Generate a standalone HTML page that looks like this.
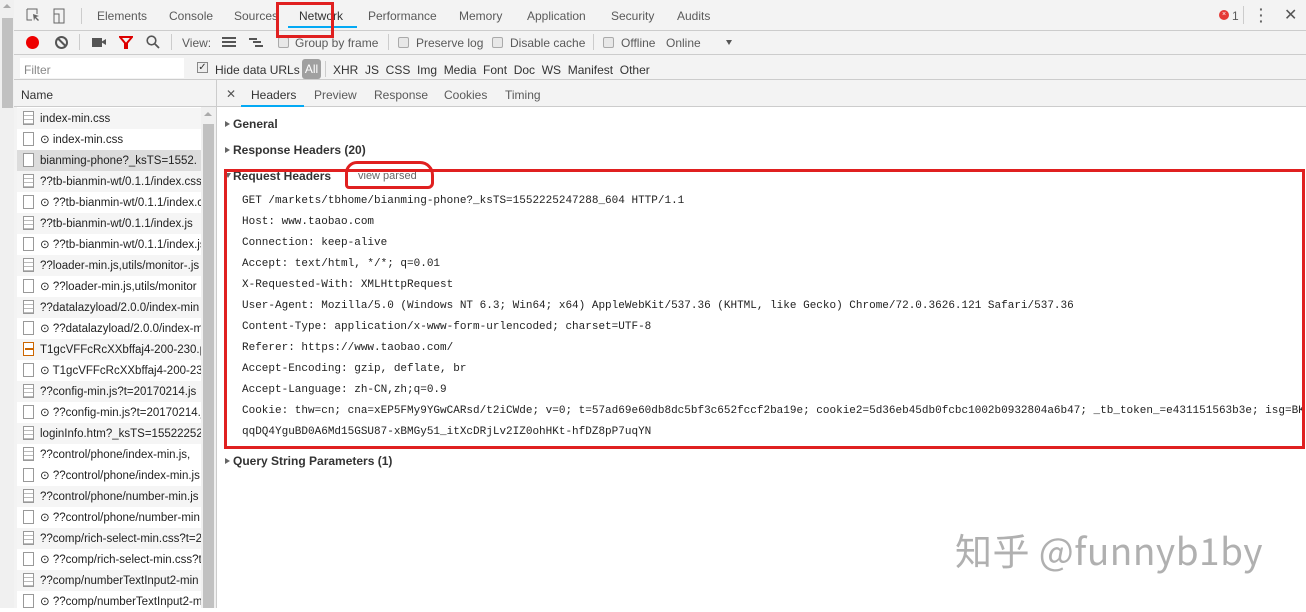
<!DOCTYPE html>
<html><head><meta charset="utf-8"><style>
*{margin:0;padding:0;box-sizing:border-box}
body{width:1306px;height:608px;overflow:hidden;background:#fff;font-family:"Liberation Sans",sans-serif;font-size:12px;color:#333;position:relative}
.a{position:absolute;white-space:nowrap}
.bar{position:absolute;left:14px;right:0;background:#f3f3f3;border-bottom:1px solid #ccc}
.t{position:absolute;white-space:nowrap;color:#5a5a5a;font-size:12px}
.mono{font-family:"Liberation Mono",monospace;font-size:11px;color:#222;position:absolute;left:242px;white-space:nowrap}
.cb{position:absolute;width:11px;height:11px;border:1px solid #aaa;background:#e8e8e8;border-radius:2px}
.row{position:absolute;left:17px;width:184px;height:21px;white-space:nowrap;overflow:hidden;font-size:11.5px;color:#222;line-height:22px}
.doc{display:inline-block;width:11px;height:14px;border:1px solid #999;vertical-align:-3px;margin:0 6px 0 6px;background:#fff}
.doc.l{background:repeating-linear-gradient(#fff 0 3px,#bbb 3px 4px)}
.sec{position:absolute;left:233px;font-weight:bold;font-size:12px;color:#333}
.tri{position:absolute;left:225px;width:0;height:0;border-left:5px solid #666;border-top:3.5px solid transparent;border-bottom:3.5px solid transparent}
</style></head><body>
<div class="a" style="left:0;top:0;width:14px;height:608px;background:#f0f0f0"></div>
<div class="a" style="left:2px;top:18px;width:11px;height:90px;background:#c1c1c1"></div>
<div class="a" style="left:3px;top:4px;width:0;height:0;border-left:4px solid transparent;border-right:4px solid transparent;border-bottom:4px solid #aaa"></div>

<div class="bar" style="top:0;height:31px"></div>
<div class="bar" style="top:31px;height:24px"></div>
<div class="bar" style="top:55px;height:25px"></div>
<div class="bar" style="top:80px;height:27px"></div>

<svg class="a" style="left:26px;top:8px" width="40" height="16"><path d="M1 1h10v5M1 1v11h5" stroke="#666" fill="none"/><path d="M7 6l6 2-3 1 3 3-1 1-3-3-1 3z" fill="#666"/><rect x="28" y="1" width="10" height="14" fill="none" stroke="#666"/><rect x="28" y="6" width="5" height="9" fill="none" stroke="#666"/></svg>
<div class="a" style="left:81px;top:8px;width:1px;height:16px;background:#ccc"></div>
<div class="t" style="left:97px;top:9px">Elements</div>
<div class="t" style="left:169px;top:9px">Console</div>
<div class="t" style="left:234px;top:9px">Sources</div>
<div class="t" style="left:299px;top:9px;color:#333">Network</div>
<div class="a" style="left:288px;top:26px;width:69px;height:2px;background:#03a9f4"></div>
<div class="t" style="left:368px;top:9px">Performance</div>
<div class="t" style="left:459px;top:9px">Memory</div>
<div class="t" style="left:527px;top:9px">Application</div>
<div class="t" style="left:611px;top:9px">Security</div>
<div class="t" style="left:677px;top:9px">Audits</div>
<div class="a" style="left:1219px;top:10px;width:10px;height:10px;border-radius:50%;background:#e53935;color:#fff;font-size:7px;line-height:10px;text-align:center">×</div>
<div class="t" style="left:1232px;top:9px">1</div>
<div class="a" style="left:1243px;top:6px;width:1px;height:18px;background:#ccc"></div>
<div class="t" style="left:1259px;top:6px;font-weight:bold;font-size:14px;line-height:6px;color:#666">·<br>·<br>·</div>
<div class="t" style="left:1284px;top:5px;font-size:16px;color:#555">✕</div>

<div class="a" style="left:26px;top:36px;width:13px;height:13px;border-radius:50%;background:#e00"></div>
<div class="a" style="left:55px;top:36px;width:13px;height:13px;border-radius:50%;border:2px solid #555"></div>
<div class="a" style="left:56px;top:41px;width:11px;height:2px;background:#555;transform:rotate(45deg)"></div>
<div class="a" style="left:79px;top:34px;width:1px;height:16px;background:#ccc"></div>
<div class="a" style="left:92px;top:38px;width:10px;height:9px;background:#555"></div>
<div class="a" style="left:101px;top:39px;border-right:5px solid #555;border-top:3.5px solid transparent;border-bottom:3.5px solid transparent"></div>
<svg class="a" style="left:119px;top:36px" width="14" height="13"><path d="M1 1h12l-5 6v5h-2v-5z" fill="none" stroke="#d00" stroke-width="2"/></svg>
<svg class="a" style="left:146px;top:35px" width="14" height="14"><circle cx="5.5" cy="5.5" r="4.3" fill="none" stroke="#555" stroke-width="1.6"/><path d="M9 9l4 4" stroke="#555" stroke-width="1.8"/></svg>
<div class="a" style="left:171px;top:34px;width:1px;height:16px;background:#ccc"></div>
<div class="t" style="left:182px;top:36px">View:</div>
<div class="a" style="left:222px;top:37px;width:14px;height:10px;background:repeating-linear-gradient(#555 0 2px,transparent 2px 4px)"></div>
<div class="a" style="left:249px;top:38px;width:14px;height:9px;background:linear-gradient(#555,#555) 0 0/8px 2px no-repeat,linear-gradient(#555,#555) 4px 3px/8px 2px no-repeat,linear-gradient(#555,#555) 6px 7px/8px 2px no-repeat"></div>
<div class="cb" style="left:278px;top:37px"></div>
<div class="t" style="left:295px;top:36px">Group by frame</div>
<div class="a" style="left:388px;top:34px;width:1px;height:16px;background:#ccc"></div>
<div class="cb" style="left:398px;top:37px"></div>
<div class="t" style="left:416px;top:36px">Preserve log</div>
<div class="cb" style="left:492px;top:37px"></div>
<div class="t" style="left:510px;top:36px">Disable cache</div>
<div class="a" style="left:593px;top:34px;width:1px;height:16px;background:#ccc"></div>
<div class="cb" style="left:603px;top:37px"></div>
<div class="t" style="left:621px;top:36px">Offline</div>
<div class="t" style="left:666px;top:36px">Online</div>
<div class="a" style="left:726px;top:40px;border-top:5px solid #555;border-left:3.5px solid transparent;border-right:3.5px solid transparent"></div>

<div class="a" style="left:20px;top:58px;width:164px;height:20px;background:#fff"></div>
<div class="t" style="left:24px;top:63px;color:#888">Filter</div>
<div class="a" style="left:197px;top:62px;width:11px;height:11px;border:1px solid #888;background:#eee;font-size:10px;line-height:9px;text-align:center;color:#333">✓</div>
<div class="t" style="left:215px;top:63px;color:#333">Hide data URLs</div>
<div class="a" style="left:302px;top:59px;width:19px;height:20px;border-radius:3px;background:#a0a0a0;color:#fff;font-size:12px;line-height:21px;text-align:center">All</div>
<div class="a" style="left:325px;top:61px;width:1px;height:16px;background:#ccc"></div>
<div class="t" style="left:333px;top:63px;color:#333">XHR&nbsp;&nbsp;JS&nbsp;&nbsp;CSS&nbsp;&nbsp;Img&nbsp;&nbsp;Media&nbsp;&nbsp;Font&nbsp;&nbsp;Doc&nbsp;&nbsp;WS&nbsp;&nbsp;Manifest&nbsp;&nbsp;Other</div>

<div class="t" style="left:21px;top:88px;color:#333">Name</div>
<div class="a" style="left:216px;top:80px;width:1px;height:528px;background:#ccc"></div>
<div class="t" style="left:226px;top:87px;color:#555">✕</div>
<div class="t" style="left:251px;top:88px;color:#333">Headers</div>
<div class="a" style="left:241px;top:105px;width:63px;height:2px;background:#03a9f4"></div>
<div class="t" style="left:314px;top:88px">Preview</div>
<div class="t" style="left:374px;top:88px">Response</div>
<div class="t" style="left:444px;top:88px">Cookies</div>
<div class="t" style="left:505px;top:88px">Timing</div>

<div class="a" style="left:14px;top:107px;width:3px;height:501px;background:#f3f3f3"></div>
<div class="a" style="left:201px;top:107px;width:15px;height:501px;background:#f0f0f0"></div>
<div class="a" style="left:203px;top:124px;width:11px;height:484px;background:#c1c1c1"></div>
<div class="a" style="left:204px;top:112px;border-left:4px solid transparent;border-right:4px solid transparent;border-bottom:4px solid #aaa"></div>
<div class="row" style="top:108px;background:#f5f5f5"><span class="doc l"></span>index-min.css</div>
<div class="row" style="top:129px"><span class="doc"></span>⊙ index-min.css</div>
<div class="row" style="top:150px;background:#dcdcdc"><span class="doc"></span>bianming-phone?_ksTS=1552.</div>
<div class="row" style="top:171px;background:#f5f5f5"><span class="doc l"></span>??tb-bianmin-wt/0.1.1/index.css</div>
<div class="row" style="top:192px"><span class="doc"></span>⊙ ??tb-bianmin-wt/0.1.1/index.css</div>
<div class="row" style="top:213px;background:#f5f5f5"><span class="doc l"></span>??tb-bianmin-wt/0.1.1/index.js</div>
<div class="row" style="top:234px"><span class="doc"></span>⊙ ??tb-bianmin-wt/0.1.1/index.js</div>
<div class="row" style="top:255px;background:#f5f5f5"><span class="doc l"></span>??loader-min.js,utils/monitor-.js</div>
<div class="row" style="top:276px"><span class="doc"></span>⊙ ??loader-min.js,utils/monitor</div>
<div class="row" style="top:297px;background:#f5f5f5"><span class="doc l"></span>??datalazyload/2.0.0/index-min</div>
<div class="row" style="top:318px"><span class="doc"></span>⊙ ??datalazyload/2.0.0/index-min</div>
<div class="row" style="top:339px;background:#f5f5f5"><span class="doc" style="border-color:#c60;background:linear-gradient(#c60,#c60) 1px 5px/8px 2px no-repeat,#fff"></span>T1gcVFFcRcXXbffaj4-200-230.png</div>
<div class="row" style="top:360px"><span class="doc"></span>⊙ T1gcVFFcRcXXbffaj4-200-230.png</div>
<div class="row" style="top:381px;background:#f5f5f5"><span class="doc l"></span>??config-min.js?t=20170214.js</div>
<div class="row" style="top:402px"><span class="doc"></span>⊙ ??config-min.js?t=20170214.js</div>
<div class="row" style="top:423px;background:#f5f5f5"><span class="doc l"></span>loginInfo.htm?_ksTS=1552225247</div>
<div class="row" style="top:444px"><span class="doc l"></span>??control/phone/index-min.js,</div>
<div class="row" style="top:465px"><span class="doc"></span>⊙ ??control/phone/index-min.js</div>
<div class="row" style="top:486px;background:#f5f5f5"><span class="doc l"></span>??control/phone/number-min.js</div>
<div class="row" style="top:507px"><span class="doc"></span>⊙ ??control/phone/number-min</div>
<div class="row" style="top:528px;background:#f5f5f5"><span class="doc l"></span>??comp/rich-select-min.css?t=2</div>
<div class="row" style="top:549px"><span class="doc"></span>⊙ ??comp/rich-select-min.css?t</div>
<div class="row" style="top:570px;background:#f5f5f5"><span class="doc l"></span>??comp/numberTextInput2-min</div>
<div class="row" style="top:591px"><span class="doc"></span>⊙ ??comp/numberTextInput2-min</div>

<div class="tri" style="top:121px"></div><div class="sec" style="top:117px">General</div>
<div class="tri" style="top:147px"></div><div class="sec" style="top:143px">Response Headers (20)</div>
<div class="a" style="left:225px;top:173px;border-top:5px solid #666;border-left:3.5px solid transparent;border-right:3.5px solid transparent"></div>
<div class="sec" style="top:169px">Request Headers</div>
<div class="t" style="left:358px;top:170px;color:#666;font-size:11px">view parsed</div>
<div class="mono" style="top:195px">GET /markets/tbhome/bianming-phone?_ksTS=1552225247288_604 HTTP/1.1</div>
<div class="mono" style="top:216px">Host: www.taobao.com</div>
<div class="mono" style="top:237px">Connection: keep-alive</div>
<div class="mono" style="top:258px">Accept: text/html, */*; q=0.01</div>
<div class="mono" style="top:279px">X-Requested-With: XMLHttpRequest</div>
<div class="mono" style="top:300px">User-Agent: Mozilla/5.0 (Windows NT 6.3; Win64; x64) AppleWebKit/537.36 (KHTML, like Gecko) Chrome/72.0.3626.121 Safari/537.36</div>
<div class="mono" style="top:321px">Content-Type: application/x-www-form-urlencoded; charset=UTF-8</div>
<div class="mono" style="top:342px">Referer: https://www.taobao.com/</div>
<div class="mono" style="top:363px">Accept-Encoding: gzip, deflate, br</div>
<div class="mono" style="top:384px">Accept-Language: zh-CN,zh;q=0.9</div>
<div class="mono" style="top:405px;width:1060px;overflow:hidden">Cookie: thw=cn; cna=xEP5FMy9YGwCARsd/t2iCWde; v=0; t=57ad69e60db8dc5bf3c652fccf2ba19e; cookie2=5d36eb45db0fcbc1002b0932804a6b47; _tb_token_=e431151563b3e; isg=BKxyz</div>
<div class="mono" style="top:426px">qqDQ4YguBD0A6Md15GSU87-xBMGy51_itXcDRjLv2IZ0ohHKt-hfDZ8pP7uqYN</div>
<div class="tri" style="top:458px"></div><div class="sec" style="top:454px">Query String Parameters (1)</div>

<div class="a" style="left:224px;top:169px;width:1081px;height:280px;border:3px solid #e02020"></div>
<div class="a" style="left:276px;top:2px;width:58px;height:36px;border:3px solid #e02020"></div>
<div class="a" style="left:345px;top:161px;width:89px;height:28px;border:3px solid #e02020;border-radius:12px 14px 6px 4px"></div>

<div class="a" style="left:955px;top:522px;font-family:'Noto Sans CJK SC',sans-serif;font-size:37px;color:#b0b0b0;text-shadow:1px 1px 0 #fff,-1px -1px 0 #fff;letter-spacing:0.5px">知乎 @funnyb1by</div>
</body></html>
